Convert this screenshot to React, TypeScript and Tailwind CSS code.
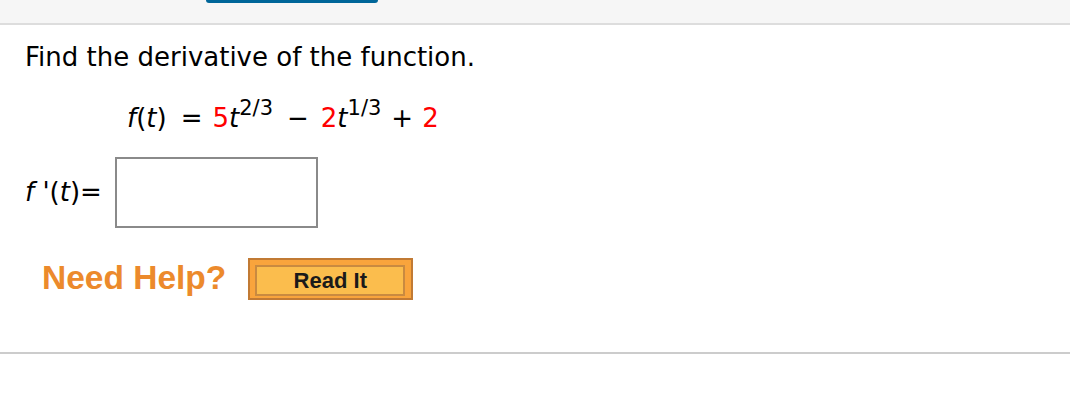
import React from 'react';

const App: React.FC = () => {
  return (
    <div className="w-[1070px] h-[412px] bg-white overflow-hidden">
      {/* top bar */}
      <div className="h-[25px] bg-[#f6f6f6] border-b-2 border-[#dddddd] pl-[206px]">
        <div className="w-[172px] h-[3px] bg-[#006699] rounded-b-[4px]"></div>
      </div>

      <div className="font-['DejaVu_Sans',Verdana,sans-serif] text-black">
        <p className="pl-[25px] pt-[15px] text-[26px] leading-[34px]">
          Find the derivative of the function.
        </p>

        <div className="pl-[127px] pt-[27px] text-[26px] leading-[34px] flex items-baseline">
          <span className="italic">f</span>
          <span>(</span>
          <span className="italic">t</span>
          <span>)</span>
          <span className="ml-[14px] mr-[10px]">=</span>
          <span className="text-[#ff0000]">5</span>
          <span className="italic">t</span>
          <span className="text-[21px] relative -top-[12px]">2/3</span>
          <span className="ml-[14px] mr-[12px]">−</span>
          <span className="text-[#ff0000]">2</span>
          <span className="italic">t</span>
          <span className="text-[21px] relative -top-[12px]">1/3</span>
          <span className="ml-[10px] mr-[9px]">+</span>
          <span className="text-[#ff0000]">2</span>
        </div>

        <div className="pl-[25px] pt-[20px] flex items-center">
          <span className="text-[26px] w-[90px] whitespace-nowrap">
            <span className="italic">f</span> '(<span className="italic">t</span>)=
          </span>
          <div className="w-[203px] h-[71px] border-2 border-[#8a8a8a] bg-white"></div>
        </div>

        <div className="pl-[42px] pt-[30px] flex items-center">
          <span className="font-['Liberation_Sans',Arial,sans-serif] font-bold text-[33.5px] text-[#ec8a2c] leading-[40px] -mt-[2px]">
            Need Help?
          </span>
          <div className="ml-[22px] w-[165px] h-[42px] border-2 border-[#c17a34] bg-[#f9a43c] pt-[5px] pl-[5px] pr-[6px] pb-[2px]">
            <div className="h-full border-2 border-[#c98a40] bg-[#fbbd4d] flex items-center justify-center">
              <span className="font-['Liberation_Sans',Arial,sans-serif] font-bold text-[22px] text-[#1a1a1a] leading-none">
                Read It
              </span>
            </div>
          </div>
        </div>
      </div>

      <div className="mt-[52px] h-[2px] bg-[#cccccc]"></div>
    </div>
  );
};

export default App;
